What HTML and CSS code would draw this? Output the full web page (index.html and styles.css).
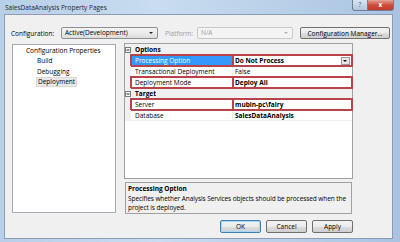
FILE: index.html
```html
<!DOCTYPE html>
<html lang="en">
<head>
  <meta charset="UTF-8" />
  <title>SalesDataAnalysis Property Pages</title>
  <link rel="stylesheet" href="styles.css">
</head>
<body>
  <div class="window">
    <!-- CAPTION -->
    <div class="titlebar">
      <span class="title">SalesDataAnalysis Property Pages</span>
      <div class="caption-btns">
        <span class="help">?</span>
        <span class="close">x</span>
      </div>
    </div>

    <div class="client">
      <div class="config-row">
        <span class="label">Configuration:</span>
        <div class="combo config-combo">Active(Development)<span class="arrow"></span></div>
        <span class="label disabled platform-label">Platform:</span>
        <div class="combo disabled platform-combo">N/A<span class="arrow"></span></div>
        <button class="btn manager-btn">Configuration Manager...</button>
      </div>

      <div class="main">
        <!-- TREE -->
        <div class="tree">
          <div class="tree-item root">Configuration Properties</div>
          <div class="tree-item child">Build</div>
          <div class="tree-item child">Debugging</div>
          <div class="tree-item child"><span class="selected">Deployment</span></div>
        </div>

        <div class="pane">
          <!-- PROPERTY GRID -->
          <div class="grid">
            <div class="row category">
              <span class="gutter"><svg width="6" height="6" viewBox="0 0 6 6"><rect x="0.5" y="0.5" width="5" height="5" fill="#fff" stroke="#7a7a7a"/><line x1="1.5" y1="3" x2="4.5" y2="3" stroke="#222"/></svg></span>
              <span class="name">Options</span>
            </div>
            <div class="row">
              <span class="gutter"></span>
              <span class="name active mark">Processing Option</span>
              <span class="value mark">Do Not Process<span class="drop"></span></span>
            </div>
            <div class="row">
              <span class="gutter"></span>
              <span class="name">Transactional Deployment</span>
              <span class="value plain">False</span>
            </div>
            <div class="row">
              <span class="gutter"></span>
              <span class="name mark">Deployment Mode</span>
              <span class="value mark">Deploy All</span>
            </div>
            <div class="row category">
              <span class="gutter"><svg width="6" height="6" viewBox="0 0 6 6"><rect x="0.5" y="0.5" width="5" height="5" fill="#fff" stroke="#7a7a7a"/><line x1="1.5" y1="3" x2="4.5" y2="3" stroke="#222"/></svg></span>
              <span class="name">Target</span>
            </div>
            <div class="row">
              <span class="gutter"></span>
              <span class="name mark">Server</span>
              <span class="value mark">mubin-pc\fairy</span>
            </div>
            <div class="row">
              <span class="gutter"></span>
              <span class="name">Database</span>
              <span class="value">SalesDataAnalysis</span>
            </div>
          </div>

          <div class="desc">
            <div class="desc-title">Processing Option</div>
            <div class="desc-text">Specifies whether Analysis Services objects should be processed when the<br>project is deployed.</div>
          </div>
        </div>
      </div>

      <div class="footer">
        <button class="btn default">OK</button>
        <button class="btn">Cancel</button>
        <button class="btn">Apply</button>
      </div>
    </div>
  </div>
</body>
</html>
```

FILE: styles.css
```css
body {
  margin: 0;
  width: 400px;
  height: 242px;
  overflow: hidden;
  font-family: "Open Sans", "Noto Sans", sans-serif;
  font-size: 6.5px;
  color: #000;
  background: linear-gradient(to right, #b7cfe9, #c9dcf0 40%, #b4cce6 80%, #a9c3e1);
}

.window {
  box-sizing: border-box;
  height: 242px;
  display: flex;
  flex-direction: column;
  padding: 0 7px 3px 4px;
}

/* CAPTION */
.titlebar {
  height: 14px;
  display: flex;
  align-items: flex-start;
  justify-content: space-between;
  margin-left: -4px;
  margin-right: -7px;
}

.title {
  padding: 4px 0 0 5px;
  line-height: 8px;
  color: #1a2633;
}

.caption-btns {
  display: flex;
  margin-right: 6px;
}

.caption-btns span {
  height: 10px;
  line-height: 10px;
  text-align: center;
  color: #fff;
  border: 1px solid #6d7f98;
  border-top: none;
}

.help {
  width: 14px;
  background: linear-gradient(#d8e4f1, #b3c6dd);
  border-radius: 0 0 0 3px;
  color: #4a5d77 !important;
}

.close {
  width: 25px;
  background: linear-gradient(#e3a59a, #cf4b3c 50%, #c23b2b);
  border-left: none !important;
  border-radius: 0 0 3px 0;
  font-weight: bold;
}

.client {
  flex: 1;
  background: #f0f0f0;
  border: 1px solid #8c9db3;
  display: flex;
  flex-direction: column;
}

/* CONFIG ROW */
.config-row {
  display: flex;
  align-items: center;
  height: 12px;
  margin: 12px 0 0 6px;
}

.label {
  width: 50px;
}

.disabled {
  color: #a0a0a0;
}

.platform-label {
  width: 32px;
  margin-left: 7px;
}

.combo {
  box-sizing: border-box;
  height: 12px;
  line-height: 10px;
  padding-left: 3px;
  border: 1px solid #8e8f8f;
  border-radius: 2px;
  background: linear-gradient(#f3f3f3, #ebebeb 50%, #dcdcdc);
  position: relative;
}

.config-combo {
  width: 97px;
}

.platform-combo {
  width: 96px;
  border-color: #c9c9c9;
  background: #f4f4f4;
}

.arrow {
  position: absolute;
  right: 4px;
  top: 4px;
  border-left: 2px solid transparent;
  border-right: 2px solid transparent;
  border-top: 2px solid #222;
}

.platform-combo .arrow {
  border-top-color: #b0b0b0;
}

.btn {
  box-sizing: border-box;
  height: 13px;
  padding: 0;
  font: inherit;
  color: #000;
  border: 1px solid #707070;
  border-radius: 2px;
  background: linear-gradient(#f2f2f2, #ebebeb 50%, #dddddd 51%, #cfcfcf);
}

.manager-btn {
  width: 90px;
  height: 12px;
  margin-left: 7px;
}

/* MAIN */
.main {
  display: flex;
  height: 171px;
  margin: 4px 0 0 7px;
  gap: 8px;
}

.tree {
  box-sizing: border-box;
  width: 104px;
  height: 169px;
  margin-top: 1px;
  padding-top: 1px;
  background: #fff;
  border: 1px solid #a8abb2;
}

.tree-item {
  height: 10.3px;
  line-height: 10.3px;
  white-space: nowrap;
}

.root {
  padding-left: 13px;
}

.child {
  padding-left: 24px;
}

.selected {
  display: inline-block;
  padding: 0 1px;
  margin-left: -1px;
  background: #e8e8e8;
  border: 1px solid #d9d9d9;
  line-height: 8.3px;
}

.pane {
  width: 229px;
  display: flex;
  flex-direction: column;
}

/* PROPERTY GRID */
.grid {
  box-sizing: border-box;
  height: 136px;
  background: #fff;
  border: 1px solid #a0a0a0;
}

.row {
  display: flex;
  height: 11px;
  line-height: 11px;
  white-space: nowrap;
}

.gutter {
  width: 6px;
  flex: none;
  background: #f0f0f0;
  display: flex;
  align-items: center;
}

.name {
  box-sizing: border-box;
  width: 102px;
  flex: none;
  padding-left: 4px;
  overflow: hidden;
  border-right: 1px solid #f0f0f0;
  border-bottom: 1px solid #f0f0f0;
}

.value {
  flex: 1;
  padding-left: 2px;
  font-weight: bold;
  position: relative;
  border-bottom: 1px solid #f0f0f0;
}

.value.plain {
  font-weight: normal;
}

.category {
  background: #f0f0f0;
}

.category .name {
  width: auto;
  font-weight: bold;
  border: none;
}

.active {
  background: #3399ff;
  color: #fff;
}

.mark {
  outline: 2px solid #b8434b;
  outline-offset: -1px;
}

.drop {
  position: absolute;
  right: 2px;
  top: 2px;
  width: 7px;
  height: 6px;
  background: #e6e6e6;
  border: 1px solid #9a9a9a;
}

.drop::after {
  content: '';
  position: absolute;
  left: 1px;
  top: 2px;
  border-left: 2.5px solid transparent;
  border-right: 2.5px solid transparent;
  border-top: 2.5px solid #111;
}

.desc {
  box-sizing: border-box;
  height: 32px;
  margin: 3px 1px 0;
  padding: 1px 2px;
  border: 1px solid #a0a0a0;
  background: #f0f0f0;
  line-height: 9.5px;
  white-space: nowrap;
}

.desc-title {
  font-weight: bold;
}

.desc-text {
  letter-spacing: -0.08px;
}

/* FOOTER */
.footer {
  display: flex;
  justify-content: flex-end;
  gap: 5px;
  margin: 6px 39px 0 0;
}

.footer .btn {
  width: 41px;
}

.footer .btn.default {
  border-color: #3c7fb1;
  box-shadow: inset 0 0 0 1px #a6d8f7;
}
```
